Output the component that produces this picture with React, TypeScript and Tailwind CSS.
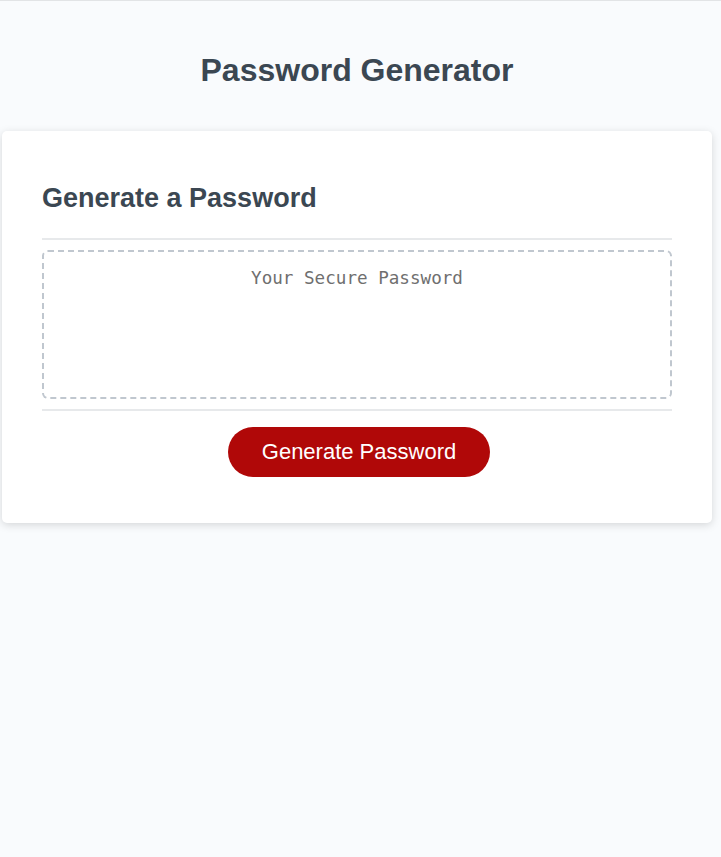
import React from "react";

export default function App() {
  return (
    <div className="min-h-[857px] w-full bg-[#f9fbfd] border-t border-[#e2e4e6] font-['Liberation_Sans',Arial,sans-serif] text-[#3b4752]">
      <header className="w-[714px] pt-[51px] pb-[20px]">
        <h1 className="text-center text-[32px] font-bold leading-[37px]">Password Generator</h1>
      </header>
      <div className="mt-[22px] ml-[2px] w-[710px] rounded-[5px] bg-white px-[40px] pt-[30px] pb-[30px] shadow-[0_2px_8px_0_rgba(0,0,0,0.15)]">
        <h2 className="mt-[22px] text-[27px] font-bold leading-[31px]">Generate a Password</h2>
        <div className="mt-[24px] h-[2px] w-full bg-[#e7e9eb]" />
        <div className="my-[10px] flex h-[149px] w-full justify-center rounded-[6px] border-2 border-dashed border-[#c0c7cf] px-[15px] pt-[15px]">
          <span className="font-['DejaVu_Sans_Mono',monospace] text-[17.6px] leading-[22px] text-[#6f6f6f]">Your Secure Password</span>
        </div>
        <div className="h-[2px] w-full bg-[#e7e9eb]" />
        <div className="flex justify-center">
          <button className="mt-[16px] mb-[16px] ml-[20px] mr-[16px] h-[50px] rounded-[25px] bg-[#b00808] px-[34px] text-[22px] leading-[22px] text-white">
            Generate Password
          </button>
        </div>
      </div>
    </div>
  );
}
